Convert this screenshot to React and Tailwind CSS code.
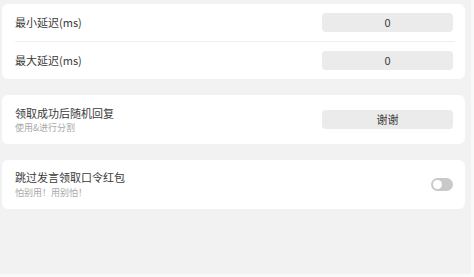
import { useState } from 'react'

const font = { fontFamily: '"Noto Sans CJK SC", "Noto Sans", sans-serif' }

function Field({ label, value }) {
  return (
    <div className="flex items-center justify-between h-[37px] pl-[13px] pr-[12px]">
      <span className="text-[11px] text-[#3a3a3a]">{label}</span>
      <div className="w-[131px] h-[19px] rounded-[4px] bg-[#ebebeb] flex items-center justify-center text-[11px] text-[#3a3a3a]">
        {value}
      </div>
    </div>
  )
}

export default function App() {
  const [skip, setSkip] = useState(false)

  return (
    <div className="w-[474px] h-[277px] bg-[#f9f9f9]" style={font}>
      <div className="w-[471px] h-[274px] bg-[#f2f2f2] pt-[4px] pl-[2px] pr-[6px] flex flex-col gap-[16px]">
        {/* delays */}
        <div className="bg-white rounded-[6px]">
          <Field label="最小延迟(ms)" value="0" />
          <div className="h-px bg-[#f0f0f0] ml-[13px] mr-[10px]" />
          <Field label="最大延迟(ms)" value="0" />
        </div>

        {/* reply */}
        <div className="bg-white rounded-[6px] h-[49px] flex items-center justify-between pl-[13px] pr-[12px]">
          <div className="flex flex-col leading-none">
            <span className="text-[11px] text-[#3a3a3a]">领取成功后随机回复</span>
            <span className="text-[9px] text-[#a8a8a8] mt-[4px]">使用&amp;进行分割</span>
          </div>
          <div className="w-[131px] h-[19px] rounded-[4px] bg-[#ebebeb] flex items-center justify-center text-[11px] text-[#3a3a3a]">
            谢谢
          </div>
        </div>

        {/* skip */}
        <div className="bg-white rounded-[6px] h-[49px] flex items-center justify-between pl-[13px] pr-[12px]">
          <div className="flex flex-col leading-none">
            <span className="text-[11px] text-[#3a3a3a]">跳过发言领取口令红包</span>
            <span className="text-[9px] text-[#a8a8a8] mt-[5px]">怕别用！用别怕！</span>
          </div>
          <button
            onClick={() => setSkip(!skip)}
            className={`w-[22px] h-[13px] rounded-full flex items-center px-[2px] ${skip ? 'bg-[#3b82f6] justify-end' : 'bg-[#c9c9c9] justify-start'}`}
          >
            <span className="w-[9px] h-[9px] rounded-full bg-white" />
          </button>
        </div>
      </div>
    </div>
  )
}
